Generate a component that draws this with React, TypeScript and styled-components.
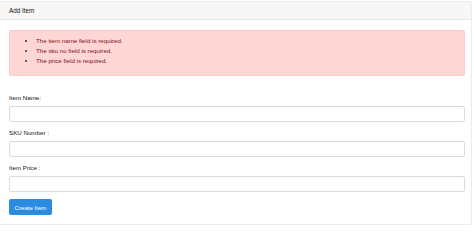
import React from "react";
import styled, { createGlobalStyle } from "styled-components";

const Global = createGlobalStyle`
  html, body { margin: 0; padding: 0; background: #fff; }
  body { font-family: "Liberation Sans", Arial, sans-serif; color: #111; }
`;

const Card = styled.div`
  width: 473px;
  margin-left: -1px;
  margin-top: 1px;
  border: 1px solid #ececec;
  border-radius: 2px;
  background: #fff;
  box-sizing: border-box;
`;

const CardHeader = styled.div`
  height: 18px;
  background: #f7f7f7;
  border-bottom: 1px solid #e6e6e6;
  display: flex;
  align-items: center;
  padding-left: 9px;
  font-size: 6.3px;
  color: #111;
  box-sizing: border-box;
`;

const CardBody = styled.div`
  padding: 10px 6px 9px 9px;
`;

const Alert = styled.div`
  background: #ffd6d6;
  border: 1px solid #fccaca;
  border-radius: 2px;
  height: 46px;
  box-sizing: border-box;
  padding-top: 5px;
  margin-bottom: 18px;
`;

const ErrorList = styled.ul`
  margin: 0;
  padding-left: 26px;
  list-style: disc;
  color: #7a1218;
  font-size: 6.2px;
  line-height: 10px;
`;

const Group = styled.div`
  display: flex;
  flex-direction: column;
  margin-bottom: 7px;
`;

const Label = styled.label`
  font-size: 6.2px;
  color: #111;
  line-height: 8px;
  height: 8px;
  margin-bottom: 4px;
`;

const Input = styled.input`
  height: 16px;
  box-sizing: border-box;
  border: 1px solid #dcdcdc;
  border-radius: 2px;
  background: #fff;
  outline: none;
  padding: 0 4px;
`;

const Button = styled.button`
  width: 43px;
  height: 16px;
  border: none;
  border-radius: 2px;
  background: #2a8ce0;
  color: #fff;
  font-family: "Liberation Sans", Arial, sans-serif;
  font-size: 6.1px;
  padding: 0;
  display: flex;
  align-items: center;
  justify-content: center;
`;

const fields = ["Item Name:", "SKU Number :", "Item Price :"];

export default function App() {
  return (
    <>
      <Global />
      <Card>
        <CardHeader>Add Item</CardHeader>
        <CardBody>
          <Alert>
            <ErrorList>
              <li>The item name field is required.</li>
              <li>The sku no field is required.</li>
              <li>The price field is required.</li>
            </ErrorList>
          </Alert>
          {fields.map((f) => (
            <Group key={f}>
              <Label>{f}</Label>
              <Input type="text" />
            </Group>
          ))}
          <Button>Create Item</Button>
        </CardBody>
      </Card>
    </>
  );
}
